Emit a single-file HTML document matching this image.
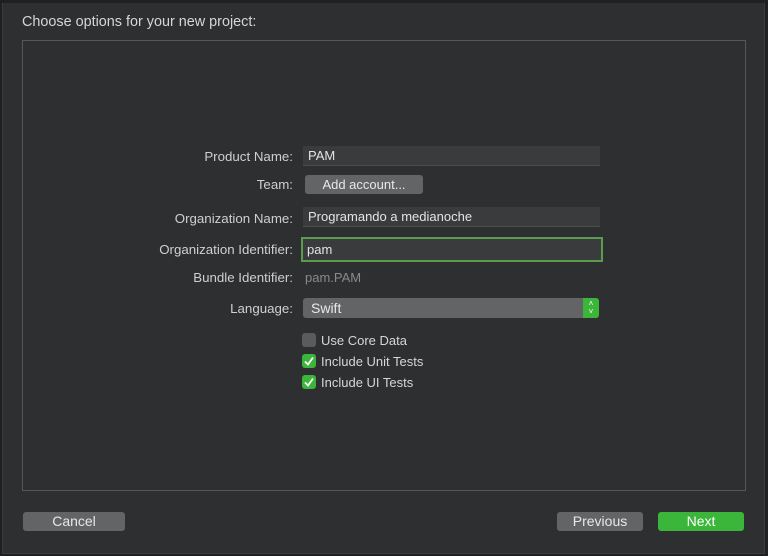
<!DOCTYPE html><html><head><style>
body{margin:0;width:768px;height:556px;background:#1f2022;font-family:"Liberation Sans",sans-serif;overflow:hidden;position:relative}
.win{position:absolute;left:2px;top:3px;width:761px;height:550px;background:#2e2f31;border-left:1px solid #3a3b3d;border-right:1px solid #3a3b3d;border-bottom:1px solid #3a3b3d}
.t{position:absolute;color:#d6d6d6;font-size:14.4px}
.panel{position:absolute;left:22px;top:40px;width:722px;height:449px;border:1px solid #55575a}
.lbl{position:absolute;right:475px;color:#cfcfcf;font-size:13.3px;text-align:right;white-space:nowrap}
.fld{position:absolute;left:303px;width:297px;height:20px;background:#3a3b3d;border-bottom:1px solid #4a4b4d;color:#e4e4e4;font-size:13px;line-height:20px;padding-left:5px;box-sizing:border-box}
.btn{position:absolute;height:19px;border-radius:3px;background:#636466;color:#e8e8e8;font-size:14px;text-align:center;line-height:19px}
.cb{position:absolute;left:302px;width:14px;height:14px;border-radius:3px;background:#5a5b5d}
.cb.on{background:#3bb53a}
.cl{position:absolute;left:321px;color:#d6d6d6;font-size:13px}
</style></head><body>
<div class="win"></div>
<div class="t" style="left:22px;top:14px">Choose options for your new project:</div>
<div class="panel"></div>
<div class="lbl" style="top:149px">Product Name:</div>
<div class="fld" style="top:146px">PAM</div>
<div class="lbl" style="top:177px">Team:</div>
<div class="btn" style="left:305px;top:175px;width:118px;font-size:13px">Add account...</div>
<div class="lbl" style="top:211px">Organization Name:</div>
<div class="fld" style="top:207px">Programando a medianoche</div>
<div class="lbl" style="top:242px">Organization Identifier:</div>
<div class="fld" style="top:237px;left:301px;width:302px;height:25px;border:2px solid #5c9a4f;line-height:21px;padding-left:4px">pam</div>
<div class="lbl" style="top:270px">Bundle Identifier:</div>
<div style="position:absolute;left:305px;top:270px;color:#8a8a8a;font-size:13px">pam.PAM</div>
<div class="lbl" style="top:301px">Language:</div>
<div class="btn" style="left:303px;top:298px;width:296px;height:20px;text-align:left;padding-left:8px;box-sizing:border-box;line-height:20px">Swift</div>
<div style="position:absolute;left:583px;top:298px;width:16px;height:20px;background:#3bb53a;border-radius:0 3px 3px 0;color:#fff;font-size:8px;line-height:8px;text-align:center;padding-top:2px;box-sizing:border-box">˄<br>˅</div>
<div class="cb" style="top:333px"></div><div class="cl" style="top:333px">Use Core Data</div>
<div class="cb on" style="top:354px"><svg width="14" height="14"><path d="M3 7.5l3 3 5-7" stroke="#fff" stroke-width="1.8" fill="none"/></svg></div><div class="cl" style="top:354px">Include Unit Tests</div>
<div class="cb on" style="top:375px"><svg width="14" height="14"><path d="M3 7.5l3 3 5-7" stroke="#fff" stroke-width="1.8" fill="none"/></svg></div><div class="cl" style="top:375px">Include UI Tests</div>
<div class="btn" style="left:23px;top:512px;width:102px">Cancel</div>
<div class="btn" style="left:557px;top:512px;width:86px">Previous</div>
<div class="btn" style="left:658px;top:512px;width:86px;background:#3bb53a;color:#fff">Next</div>
</body></html>
